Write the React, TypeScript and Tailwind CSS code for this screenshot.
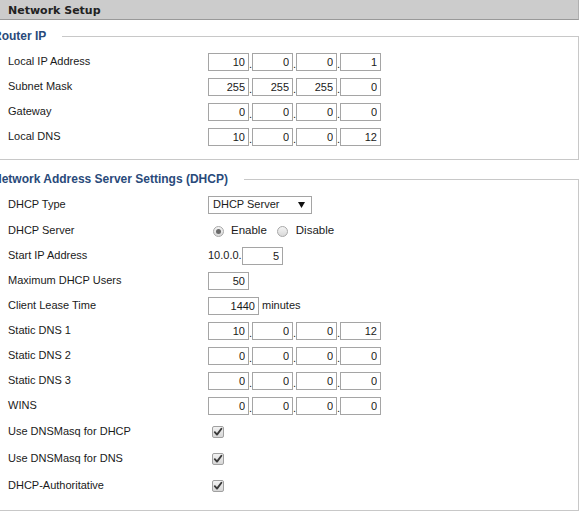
import React from 'react'

const Box = ({ value, width = 'w-[41px]' }: { value: string; width?: string }) => (
  <input
    readOnly
    value={value}
    className={`${width} h-[18px] shrink-0 border border-[#a5a5a5] bg-white pr-[3px] text-right text-[11px] leading-[16px] text-[#1a1a1a] outline-none`}
  />
)

const Octets = ({ values }: { values: string[] }) => (
  <div className="flex items-end">
    {values.map((v, i) => (
      <React.Fragment key={i}>
        <Box value={v} />
        {i < 3 && <span className="w-[3px] text-[11px] leading-[14px]">.</span>}
      </React.Fragment>
    ))}
  </div>
)

const Row = ({ label, h = 'h-[25px]', children }: { label: string; h?: string; children?: React.ReactNode }) => (
  <div className={`flex ${h} items-center`}>
    <div className="w-[200px] shrink-0">{label}</div>
    <div className="flex items-center">{children}</div>
  </div>
)

const Radio = ({ checked }: { checked?: boolean }) => (
  <span className="flex h-[11px] w-[11px] shrink-0 items-center justify-center rounded-full border border-[#a8a8a8] bg-gradient-to-b from-[#f4f4f4] to-[#d9d9d9]">
    {checked && <span className="h-[5px] w-[5px] rounded-full bg-[#6a6a6a]" />}
  </span>
)

const Checkbox = () => (
  <span className="ml-[4px] flex h-[12px] w-[12px] items-center justify-center rounded-[2px] border border-[#a0a0a0] bg-gradient-to-b from-[#f2f2f2] to-[#d6d6d6]">
    <svg width="10" height="10" viewBox="0 0 10 10">
      <path d="M1.8 5.2 L4 7.6 L8.4 1.8" fill="none" stroke="#3a3a3a" strokeWidth="1.9" strokeLinecap="round" strokeLinejoin="round" />
    </svg>
  </span>
)

const Section = ({ title, mt, pb, children }: { title: string; mt: string; pb: string; children: React.ReactNode }) => (
  <fieldset className={`${mt} -ml-[20px] w-[599px] border border-[#c8c8c8] p-0`}>
    <legend className="ml-[10px] pl-[2px] pr-[16px] text-[12px] font-bold leading-[16px] text-[#294a7a]">{title}</legend>
    <div className={`pl-[27px] pt-[5px] ${pb}`}>{children}</div>
  </fieldset>
)

export default function App() {
  return (
    <div className="w-[580px] h-[511px] overflow-hidden bg-white font-['Liberation_Sans',Arial,sans-serif] text-[11px] text-[#1a1a1a]">
      <div className="h-[20px] w-[579px] border-b border-r border-b-[#999999] border-r-[#b0b0b0] bg-[#cccccc] pl-[8px] pt-[3px] font-['DejaVu_Sans',Verdana,sans-serif] text-[11px] font-bold leading-[16px] text-[#222222]">
        Network Setup
      </div>

      <Section title="Router IP" mt="mt-[8px]" pb="pb-[10px]">
        <Row label="Local IP Address">
          <Octets values={['10', '0', '0', '1']} />
        </Row>
        <Row label="Subnet Mask">
          <Octets values={['255', '255', '255', '0']} />
        </Row>
        <Row label="Gateway">
          <Octets values={['0', '0', '0', '0']} />
        </Row>
        <Row label="Local DNS">
          <Octets values={['10', '0', '0', '12']} />
        </Row>
      </Section>

      <Section title="Network Address Server Settings (DHCP)" mt="mt-[11px]" pb="pb-[11px]">
        <Row label="DHCP Type">
          <div className="flex h-[18px] w-[104px] items-center justify-between border border-[#a5a5a5] bg-white pl-[4px] pr-[6px] text-[11px]">
            <span>DHCP Server</span>
            <svg width="7" height="6" viewBox="0 0 7 6">
              <path d="M0 0 H7 L3.5 6 Z" fill="#111" />
            </svg>
          </div>
        </Row>
        <Row label="DHCP Server" h="h-[26px]">
          <div className="ml-[5px] flex items-center pt-[2px]">
            <Radio checked />
            <span className="ml-[7px] text-[11.5px]">Enable</span>
            <span className="ml-[10px]">
              <Radio />
            </span>
            <span className="ml-[8px] text-[11.5px]">Disable</span>
          </div>
        </Row>
        <Row label="Start IP Address">
          <span className="w-[34px]">10.0.0.</span>
          <Box value="5" />
        </Row>
        <Row label="Maximum DHCP Users">
          <Box value="50" />
        </Row>
        <Row label="Client Lease Time">
          <Box value="1440" width="w-[51px]" />
          <span className="ml-[3px]">minutes</span>
        </Row>
        <Row label="Static DNS 1">
          <Octets values={['10', '0', '0', '12']} />
        </Row>
        <Row label="Static DNS 2">
          <Octets values={['0', '0', '0', '0']} />
        </Row>
        <Row label="Static DNS 3">
          <Octets values={['0', '0', '0', '0']} />
        </Row>
        <Row label="WINS">
          <Octets values={['0', '0', '0', '0']} />
        </Row>
        <Row label="Use DNSMasq for DHCP" h="h-[27px]">
          <Checkbox />
        </Row>
        <Row label="Use DNSMasq for DNS" h="h-[27px]">
          <Checkbox />
        </Row>
        <Row label="DHCP-Authoritative" h="h-[27px]">
          <Checkbox />
        </Row>
      </Section>
    </div>
  )
}
